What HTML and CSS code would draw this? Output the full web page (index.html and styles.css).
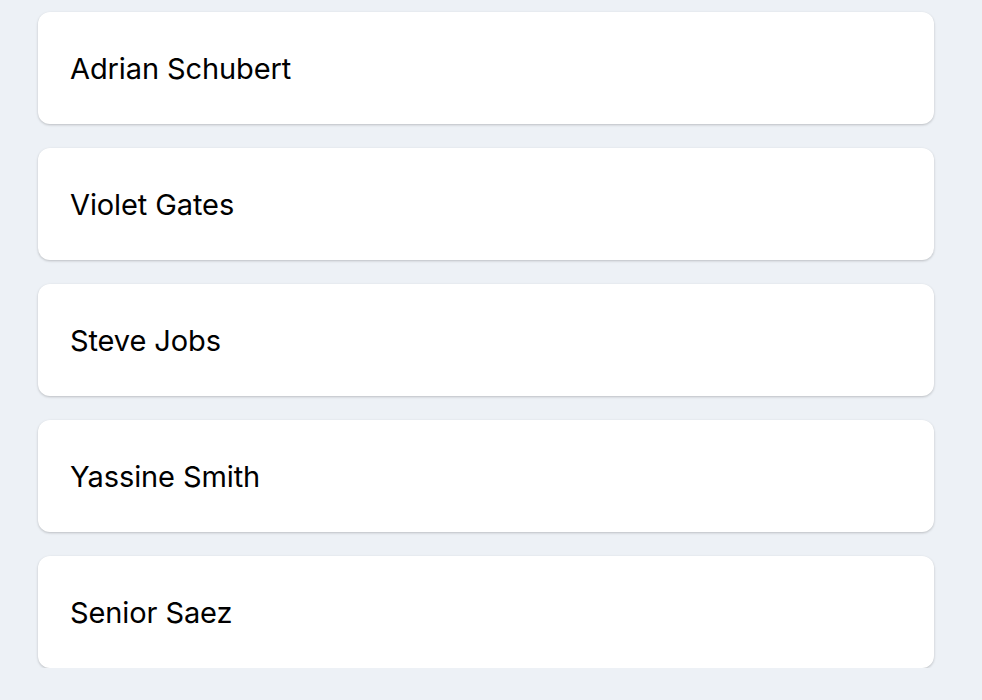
FILE: index.html
```html
<!DOCTYPE html>
<html>
<head>
<meta charset="utf-8">
<link rel="stylesheet" href="styles.css">
</head>
<body>
<ul class="list">
  <li class="card">Adrian Schubert</li>
  <li class="card">Violet Gates</li>
  <li class="card">Steve Jobs</li>
  <li class="card">Yassine Smith</li>
  <li class="card">Senior Saez</li>
</ul>
</body>
</html>
```
FILE: styles.css
```css
html, body {
  margin: 0;
  padding: 0;
  background: #edf1f6;
}
body {
  font-family: Inter, "Noto Sans", sans-serif;
  color: #000;
}
.list {
  list-style: none;
  margin: 0;
  padding: 12px 0 0 38px;
  width: 896px;
  display: flex;
  flex-direction: column;
  gap: 24px;
}
.card {
  background: #fff;
  height: 112px;
  box-sizing: border-box;
  padding: 0 32px;
  display: flex;
  align-items: center;
  border-radius: 12px;
  box-shadow: 0 1px 3px 0 rgba(0,0,0,.14), 0 1px 2px 0 rgba(0,0,0,.08);
  font-size: 29px;
  letter-spacing: -0.1px;
}
```
